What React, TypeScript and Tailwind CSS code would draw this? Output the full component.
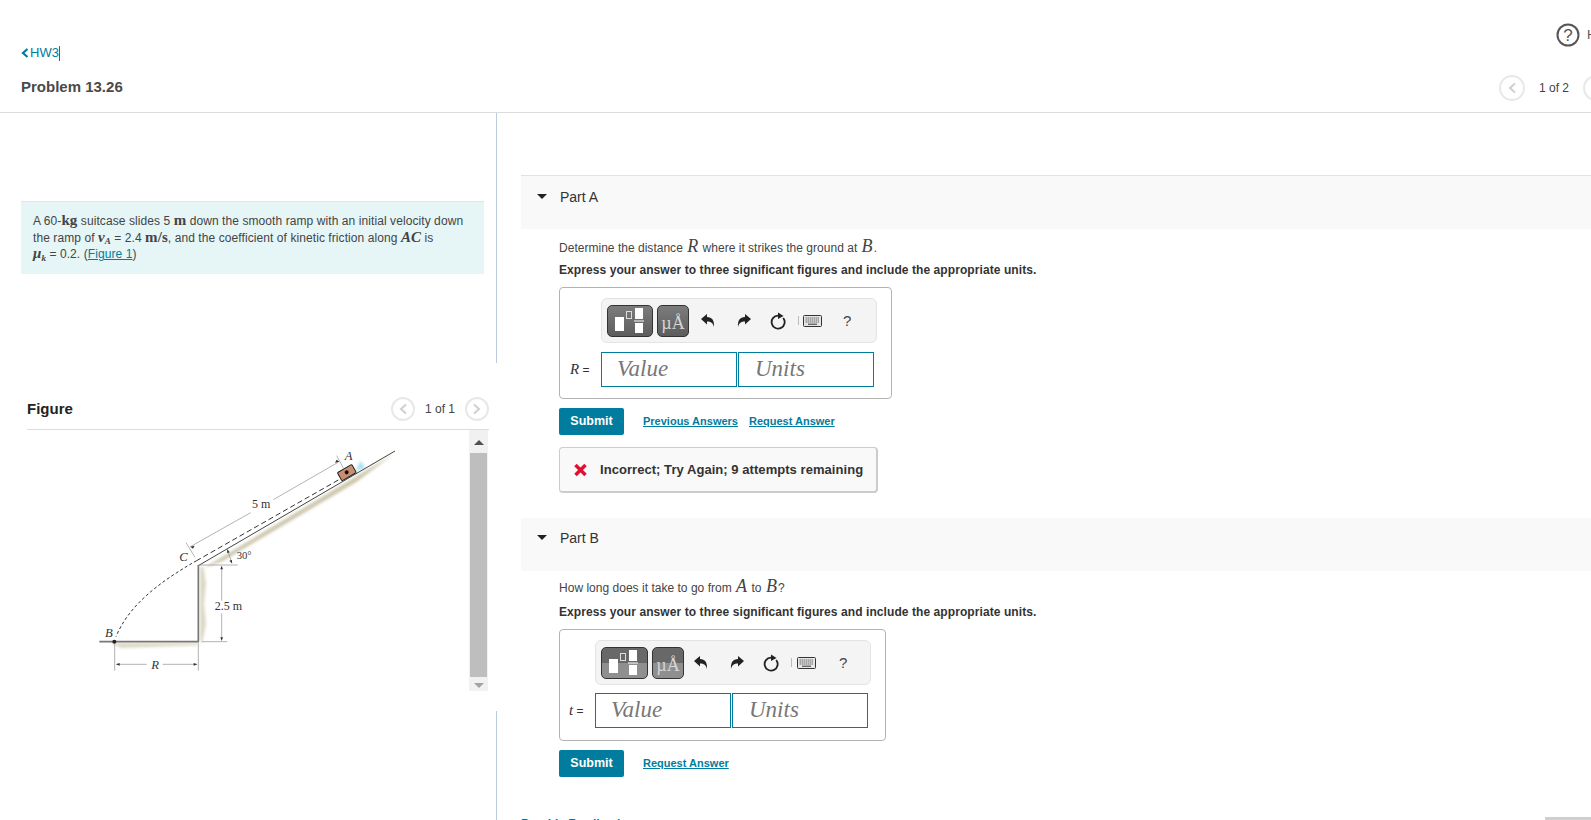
import React from "react";

const sans = "font-['Liberation_Sans',Arial,sans-serif]";
const M = ({ children, b }: { children: React.ReactNode; b?: boolean }) => (
  <span className={`font-['Liberation_Serif',serif] italic text-[15px] leading-none ${b ? "font-bold" : ""}`}>{children}</span>
);
const Q = ({ children }: { children: React.ReactNode }) => (
  <span className="font-['Liberation_Serif',serif] italic text-[18px] leading-none mx-[1px] text-[#444]">{children}</span>
);
const U = ({ children }: { children: React.ReactNode }) => (
  <span className="font-['Liberation_Serif',serif] font-bold text-[15px] leading-none">{children}</span>
);

function Chevron({ dir, size = 26, color = "#cfcfcf" }: { dir: "l" | "r"; size?: number; color?: string }) {
  return (
    <span className="flex items-center justify-center rounded-full border-2 border-[#e8e8e8] bg-white shrink-0" style={{ width: size, height: size }}>
      <svg width="10" height="12" viewBox="0 0 10 12" fill="none">
        <path d={dir === "l" ? "M8 1.5 3 6l5 4.5" : "M2 1.5 7 6l-5 4.5"} stroke={color} strokeWidth="2" />
      </svg>
    </span>
  );
}

function Toolbar({ alt }: { alt?: boolean }) {
  const btn = alt
    ? "bg-gradient-to-b from-[#686868] from-50% to-[#8f8f91] to-50%"
    : "bg-gradient-to-b from-[#7c7c7c] to-[#5d5d5d]";
  return (
    <div className="flex items-center w-[276px] h-[45px] rounded-[6px] border border-[#e3e3e3] bg-[#f4f4f4] pl-[5px]">
      <div className={`${alt ? "w-[47px]" : "w-[46px]"} h-[32px] rounded-[5px] border border-[#333] ${btn} shrink-0`}>
        <svg width="45" height="30" viewBox="0 0 45 30">
          <rect x="7" y="11" width="9" height="14" fill="#fff" />
          <rect x="18.5" y="5.5" width="5" height="7" fill="none" stroke="#ddd" />
          <rect x="27" y="2" width="8" height="11" fill="#fff" />
          <rect x="26" y="14.5" width="10" height="1" fill="#fff" />
          <rect x="27" y="17" width="8" height="10" fill="#fff" />
        </svg>
      </div>
      <div className={`ml-[4px] w-[32px] h-[32px] rounded-[5px] border border-[#333] ${btn} shrink-0 flex items-end justify-center pb-[4px] font-['Liberation_Serif',serif] text-[#d5d5d5] text-[18px] leading-none`}>
        µÅ
      </div>
      <svg className={alt ? "ml-[9px]" : "ml-[11px]"} width="16" height="16" viewBox="0 0 16 16">
        <path d="M1 6 7 1v3c5 0 7.5 3.500 7 10-1-4-3-5.500-7-5.500V11.500Z" fill="#222" />
      </svg>
      <svg className="ml-[20px]" width="16" height="16" viewBox="0 0 16 16">
        <path d="M15 6 9 1v3C4 4 1.500 7.500 2 14c1-4 3-5.500 7-5.500V11.500Z" fill="#222" />
      </svg>
      <svg className="ml-[18px]" width="17" height="18" viewBox="0 0 17 18">
        <path d="M13.200 6A6.500 6.500 0 1 1 8 3.600" fill="none" stroke="#222" strokeWidth="1.800" />
        <path d="M8 0.500 13.500 4 8 7Z" fill="#222" />
      </svg>
      <span className="ml-[11px] w-px h-[9px] bg-[#bbb]" />
      <svg className={alt ? "ml-[5px]" : "ml-[4px]"} width="19" height="12" viewBox="0 0 19 12">
        <rect x="0.500" y="0.500" width="18" height="11" rx="1" fill="#e6e6e6" stroke="#333" />
        <path d="M2.500 3h14M2.500 5h14" stroke="#666" strokeDasharray="1.500 .5" />
        <path d="M2.500 7h14" stroke="#666" strokeDasharray="1.500 .5" />
        <path d="M5 9.200h9" stroke="#333" />
      </svg>
      <span className={`${alt ? "ml-[23px]" : "ml-[21px]"} ${sans} text-[15px] text-[#444] leading-none`}>?</span>
    </div>
  );
}

function Part({
  title, question, alt, links, boxW, inputMl, children,
}: {
  title: string; question: React.ReactNode; alt?: boolean; links: string[];
  boxW: string; inputMl: string; children?: React.ReactNode;
}) {
  return (
    <section>
      <div className={`bg-[#f9f9f9] pl-[39px] text-[14px] text-[#333] leading-[16px] flex ${alt ? "h-[53px] pt-[12px]" : "h-[54px] pt-[13px] border-t border-[#e2e2e2]"}`}>
        <span className="w-0 h-0 -ml-[23px] mr-[13px] mt-[5px] border-x-[5px] border-t-[5px] border-x-transparent border-t-[#222]" />
        {title}
      </div>
      <div className="pl-[38px]">
        <p className={`${alt ? "mt-[6px]" : "mt-[8px]"} text-[12px] leading-[17px] text-[#444] h-[17px] tracking-[0.02px]`}>{question}</p>
        <p className={`${alt ? "mt-[10px]" : "mt-[8px]"} text-[12px] leading-[17px] font-bold text-[#333] tracking-[0.08px]`}>
          Express your answer to three significant figures and include the appropriate units.
        </p>
        <div className={`mt-[8px] h-[112px] rounded-[4px] border border-[#b3b3b3] ${boxW} pt-[10px]`}>
          <div className={inputMl}>
            <Toolbar alt={alt} />
          </div>
          <div className={`flex items-center ${alt ? "mt-[8px]" : "mt-[9px]"}`}>
            <span className={`text-[12px] text-[#333] whitespace-nowrap ${alt ? "w-[35px] pl-[9px]" : "w-[41px] pl-[10px]"}`}>
              <M>{alt ? "t" : "R"}</M> =
            </span>
            <div className="w-[136px] h-[35px] border border-[#007c9e] flex items-center pl-[15px] font-['Liberation_Serif',serif] italic text-[23px] text-[#777]">Value</div>
            <div className="ml-[1px] w-[136px] h-[35px] border border-[#007c9e] flex items-center pl-[16px] font-['Liberation_Serif',serif] italic text-[23px] text-[#777]">Units</div>
          </div>
        </div>
        <div className="mt-[9px] flex items-center">
          <span className="w-[65px] h-[27px] rounded-[2px] bg-[#007c9e] text-white font-bold text-[12.500px] flex items-center justify-center">Submit</span>
          <span className="ml-[19px] flex gap-[11px] text-[11px] font-bold text-[#007c9e] underline">
            {links.map((l) => <span key={l}>{l}</span>)}
          </span>
        </div>
        {children}
      </div>
    </section>
  );
}

function Figure() {
  return (
    <svg width="320" height="240" viewBox="0 0 960 720" className="block">
      <defs>
        <filter id="b" x="-20%" y="-20%" width="140%" height="140%"><feGaussianBlur stdDeviation="5" /></filter>
        <filter id="s" x="-20%" y="-20%" width="140%" height="140%"><feGaussianBlur stdDeviation="1.200" /></filter>
      </defs>
      <g filter="url(#b)" fill="#cbc5aa">
        <path d="M340 385 910 42 800 125 400 362Z" />
      </g>
      <g filter="url(#b)" fill="#dcd8c6">
        <path d="M330 380h10l8 50-6 60 6 60-10 55h-8Z" />
        <path d="M60 608h265v8l-230 8Z" />
      </g>
      <path d="M812 62 795 95l30-12Z" fill="#a8dff2" filter="url(#b)" />
      <g filter="url(#s)">
        <path d="M325 377 915 33" stroke="#444" strokeWidth="3" fill="none" />
        <path d="M325 375V605" stroke="#777" strokeWidth="5" />
        <path d="M28 605H327" stroke="#777" strokeWidth="5" />
        <path d="M745 120 320 362" stroke="#333" strokeWidth="3" strokeDasharray="16 9" fill="none" />
        <path d="M320 362C200 430 115 500 78 590" stroke="#333" strokeWidth="3" strokeDasharray="9 7" fill="none" />
        <g transform="rotate(-30 770 97)">
          <rect x="745" y="84" width="50" height="28" rx="3" fill="#c98e70" stroke="#222" strokeWidth="3" />
          <circle cx="770" cy="97" r="6" fill="#111" />
        </g>
        <circle cx="73" cy="605" r="6" fill="#222" />
        <g stroke="#8c8c8c" strokeWidth="2" fill="none">
          <path d="M301 320 482 218M550 179 746 66" />
          <path d="M288 308 315 352M740 47 762 88" />
          <path d="M325 375H443M335 605H412" />
          <path d="M395 378V482M395 520V602" />
          <path d="M74 612V692M325 610V692M80 673H170M218 673H320" />
          <path d="M412 328 426 370" />
        </g>
        <g fill="#333">
          <path d="M301 320l13-3-5 9ZM748 65l-13 3 5-9ZM395 378l-4 10h8ZM395 602l-4-10h8ZM78 673l11-4v8ZM322 673l-11-4v8ZM412 328l7 9-8 2ZM426 370l-8-8 8-2Z" />
        </g>
      </g>
      <g fill="#333" className="font-['Liberation_Serif',serif]" fontSize="36">
        <text x="486" y="203">5 m</text>
        <text x="374" y="509">2.5 m</text>
        <text x="440" y="358" fontSize="32">30°</text>
        <g fontStyle="italic" fontSize="38">
          <text x="764" y="60">A</text>
          <text x="268" y="362">C</text>
          <text x="45" y="592">B</text>
          <text x="184" y="686">R</text>
        </g>
      </g>
    </svg>
  );
}

export default function App() {
  return (
    <div className={`${sans} relative w-[1591px] h-[820px] overflow-hidden bg-white text-[#333]`}>
      <header className="h-[113px] pl-[9px] flex flex-col border-b border-[#dcdcdc]">
        <div className="h-[43px] pl-[12px] flex justify-end items-end shrink-0 w-[1582px]">
          <span className="flex items-center w-[35px] mb-[-4px] overflow-hidden shrink-0">
            <svg className="shrink-0" width="24" height="24" viewBox="0 0 24 24" fill="none">
              <circle cx="12" cy="12" r="10.500" stroke="#555" strokeWidth="2" />
              <text x="12" y="18" textAnchor="middle" fontSize="17" fill="#555" className="font-['Liberation_Sans',sans-serif]">?</text>
            </svg>
            <span className="ml-[7px] text-[13px] text-[#555]">Help</span>
          </span>
        </div>
        <div className="pl-[12px] flex items-center text-[13px] text-[#007c9e] leading-[16px] mt-[2px] h-[16px]">
          <svg width="8" height="10" viewBox="0 0 8 10" className="mr-[1px]"><path d="M6.500 1 2 5l4.500 4" fill="none" stroke="#007c9e" strokeWidth="2.200" /></svg>
          <span>HW3</span>
          <span className="w-px h-[15px] bg-[#007c9e]" />
        </div>
        <div className="flex items-center pl-[12px] mt-[12px] w-[1600px] shrink-0">
          <h1 className="font-bold text-[15px] leading-[18px] text-[#4a4a4a]">Problem 13.26</h1>
          <div className="ml-auto flex items-center mt-[2px]">
            <Chevron dir="l" />
            <span className="ml-[14px] mr-[14px] text-[12px] text-[#444]">1 of 2</span>
            <Chevron dir="r" />
          </div>
        </div>
      </header>

      <div className="flex h-[707px]">
        <aside className="w-[497px] shrink-0 flex flex-col">
          <div className="h-[250px] border-r border-[#bcccdc] pt-[88px] pl-[21px] pr-[12px]">
            <div className="w-[463px] h-[73px] bg-[#e6f5f6] border-t border-[#dfe6e6] px-[12px] pt-[11px] text-[12px] leading-[16.700px] text-[#444] tracking-[0.08px] whitespace-nowrap">
              A 60-<U>kg</U> suitcase slides 5 <U>m</U> down the smooth ramp with an initial velocity down<br />
              the ramp of <M b>v</M><sub className="font-['Liberation_Serif',serif] italic font-bold text-[9px]">A</sub> = 2.4 <U>m/s</U>, and the coefficient of kinetic friction along <M b>AC</M> is<br />
              <M b>μ</M><sub className="font-['Liberation_Serif',serif] italic font-bold text-[9px]">k</sub> = 0.2. (<span className="text-[#007c9e] underline">Figure 1</span>)
            </div>
          </div>
          <div className="h-[348px] pl-[27px] pr-[8px]">
            <div className="h-[67px] flex items-end border-b border-[#dcdcdc] pb-[8px]">
              <h2 className="font-bold text-[15px] text-[#222] leading-[16px] mb-[4px]">Figure</h2>
              <div className="ml-auto flex items-center">
                <Chevron dir="l" size={24} />
                <span className="mx-[10px] text-[12px] text-[#444]">1 of 1</span>
                <Chevron dir="r" size={24} />
              </div>
            </div>
            <div className="flex h-[261px] overflow-hidden">
              <div className="pl-[63px] pt-[10px] w-[442px] shrink-0">
                <Figure />
              </div>
              <div className="w-[19px] shrink-0 bg-[#f1f1f1] flex flex-col items-center">
                <span className="mt-[10px] w-0 h-0 border-x-[5px] border-b-[5px] border-x-transparent border-b-[#505050]" />
                <span className="mt-[8px] w-[17px] h-[224px] bg-[#bebebe]" />
                <span className="mt-[6px] w-0 h-0 border-x-[5px] border-t-[5px] border-x-transparent border-t-[#a3a3a3]" />
              </div>
            </div>
          </div>
          <div className="flex-1 border-r border-[#bcccdc]" />
        </aside>

        <main className="flex-1 pl-[24px] pt-[62px]">
          <Part
            title="Part A"
            question={<>Determine the distance <Q>R</Q> where it strikes the ground at <Q>B</Q>.</>}
            links={["Previous Answers", "Request Answer"]}
            boxW="w-[333px]"
            inputMl="ml-[41px]"
          >
            <div className="mt-[12px] w-[319px] h-[46px] rounded-[4px] border border-[#ccc] border-b-2 border-r-2 bg-[#f9f9f9] flex items-center pl-[13px] text-[13px] font-bold text-[#333] tracking-[0.05px]">
              <svg width="15" height="14" viewBox="0 0 15 14" className="mr-[12px] shrink-0"><path d="M2.500 2l10 10M12.500 2l-10 10" stroke="#e0102f" strokeWidth="3.500" /></svg>
              Incorrect; Try Again; 9 attempts remaining
            </div>
          </Part>
          <div className="h-[25px]" />
          <Part
            title="Part B"
            question={<>How long does it take to go from <Q>A</Q> to <Q>B</Q>?</>}
            alt
            links={["Request Answer"]}
            boxW="w-[327px]"
            inputMl="ml-[35px]"
          />
          <div className="mt-[39px] text-[12px] font-bold text-[#007c9e] leading-[16px]">Provide Feedback</div>
        </main>
      </div>

      <div className="absolute right-0 bottom-0 w-[46px] h-[3px] bg-[#cfcfcf]" />
    </div>
  );
}
